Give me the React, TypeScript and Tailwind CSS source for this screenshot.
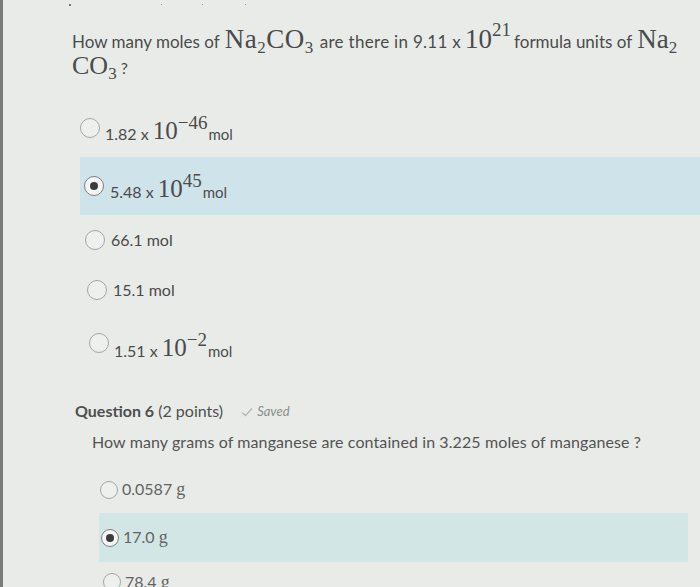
import React from 'react';

const serif = { fontFamily: '"Liberation Serif", "Times New Roman", serif' };

const Radio: React.FC<{ checked?: boolean; size?: string }> = ({ checked, size = 'w-[19px] h-[19px]' }) => (
  <span
    className={`${size} shrink-0 rounded-full border-[1.5px] flex items-center justify-center ${
      checked ? 'border-[#7d7f80] bg-[#f4f6f6]' : 'border-[#a3a6a6] bg-[#eef0ee]'
    }`}
  >
    {checked && <span className="w-[8px] h-[8px] rounded-full bg-[#3a3b3c]" />}
  </span>
);

const Sub: React.FC<{ children: React.ReactNode }> = ({ children }) => (
  <span className="text-[17px] relative top-[5px]">{children}</span>
);

const Sci: React.FC<{ mant: string; exp: string }> = ({ mant, exp }) => (
  <span className="flex items-end">
    <span className="text-[16px] leading-none mb-[1px]">{mant} x</span>
    <span className="text-[25px] leading-none ml-[4px]" style={serif}>
      10
    </span>
    <span className="text-[19px] leading-none relative -top-[11px]" style={serif}>
      {exp}
    </span>
    <span className="text-[15px] leading-none ml-[1px] mb-[1px]">mol</span>
  </span>
);

export default function App() {
  return (
    <div
      className="w-[700px] h-[587px] overflow-hidden bg-[#e9ebe8] text-[#4a4b4b] relative border-l-[3px] border-[#7b7c7a]"
      style={{ fontFamily: 'Lato, "Open Sans", sans-serif' }}
    >
      {/* top stray marks */}
      <div className="flex gap-[40px] pl-[66px] pt-[4px] h-[8px]">
        <span className="w-[2px] h-[2px] bg-[#777]" />
        <span className="w-[1px] h-[1px] bg-[#999] ml-[50px]" />
        <span className="w-[1px] h-[1px] bg-[#999]" />
        <span className="w-[1px] h-[1px] bg-[#999] ml-[2px]" />
      </div>

      {/* Question 5 */}
      <div className="pl-[69px] pr-[10px] pt-[20px] text-[17px] leading-[23px]">
        <div className="flex items-baseline whitespace-nowrap">
          <span>How many moles of</span>
          <span className="text-[27px] ml-[5px] tracking-[0.5px]" style={serif}>
            Na<Sub>2</Sub>CO<Sub>3</Sub>
          </span>
          <span className="ml-[6px] tracking-[0.3px]">are there in 9.11 x</span>
          <span className="text-[27px] ml-[4px]" style={serif}>
            10
          </span>
          <span className="text-[19px] relative -top-[12px]" style={serif}>
            21
          </span>
          <span className="ml-[3px]">formula units of</span>
          <span className="text-[27px] ml-[5px]" style={serif}>
            Na<Sub>2</Sub>
          </span>
        </div>
        <div className="flex items-baseline">
          <span className="text-[26px]" style={serif}>
            CO<Sub>3</Sub>
          </span>
          <span className="ml-[4px] text-[16px]">?</span>
        </div>
      </div>

      {/* Options */}
      <div className="mt-[18px] flex flex-col">
        <div className="h-[59px] flex items-center pl-[77px] gap-[5px]">
          <Radio size="w-[20px] h-[20px]" />
          <span className="mt-[6px]">
            <Sci mant="1.82" exp="−46" />
          </span>
        </div>
        <div className="h-[58px] ml-[77px] bg-[#cfe3ea] flex items-center pl-[4px] gap-[6px]">
          <Radio checked size="w-[20px] h-[20px]" />
          <span className="mt-[4px]">
            <Sci mant="5.48" exp="45" />
          </span>
        </div>
        <div className="h-[50px] flex items-center pl-[82px] gap-[6px] text-[16px]">
          <Radio size="w-[20px] h-[20px]" />
          <span>66.1 mol</span>
        </div>
        <div className="h-[49px] flex items-center pl-[84px] gap-[6px] text-[16px]">
          <Radio size="w-[20px] h-[20px]" />
          <span>15.1 mol</span>
        </div>
        <div className="h-[58px] flex items-center pl-[86px] gap-[5px]">
          <Radio size="w-[20px] h-[20px]" />
          <span className="mt-[8px]">
            <Sci mant="1.51" exp="−2" />
          </span>
        </div>
      </div>

      {/* Question 6 */}
      <div className="mt-[27px] pl-[72px] flex items-baseline gap-[6px] text-[16px] text-[#4e4f4f]">
        <span>
          <span className="font-bold">Question 6</span> (2 points)
        </span>
        <span className="ml-[12px] flex items-center gap-[4px] text-[13px] italic text-[#8b8d8d]">
          <svg width="12" height="10" viewBox="0 0 12 10" fill="none">
            <path d="M1 5.5 L4.5 8.5 L11 1.5" stroke="#b3b8bb" strokeWidth="1.4" />
          </svg>
          Saved
        </span>
      </div>
      <div className="mt-[7px] pl-[89px] text-[16px] tracking-[0.1px] text-[#535454] whitespace-nowrap">
        How many grams of manganese are contained in 3.225 moles of manganese ?
      </div>

      <div className="mt-[12px] flex flex-col text-[16px] text-[#626463]">
        <div className="h-[47px] flex items-center pl-[97px] gap-[4px]">
          <Radio size="w-[18px] h-[18px]" />
          <span>
            0.0587{' '}
            <span className="text-[18px]" style={serif}>
              g
            </span>
          </span>
        </div>
        <div className="h-[49px] ml-[96px] mr-[12px] bg-[#d3e6e6] flex items-center pl-[2px] gap-[4px]">
          <Radio checked size="w-[18px] h-[18px]" />
          <span>
            17.0{' '}
            <span className="text-[18px]" style={serif}>
              g
            </span>
          </span>
        </div>
        <div className="h-[40px] flex items-center pl-[100px] gap-[4px]">
          <Radio size="w-[18px] h-[18px]" />
          <span>
            78.4{' '}
            <span className="text-[18px]" style={serif}>
              g
            </span>
          </span>
        </div>
      </div>
    </div>
  );
}
